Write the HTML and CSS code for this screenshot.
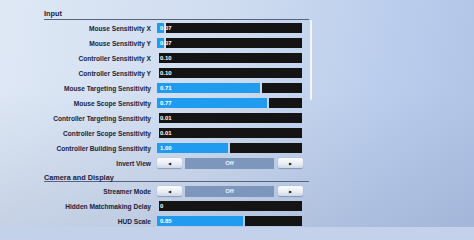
FILE: index.html
```html
<!DOCTYPE html>
<html>
<head>
<meta charset="utf-8">
<link rel="stylesheet" href="styles.css">
</head>
<body>
<div class="screen">
  <div class="panel">
    <div class="section-header first">Input</div>
    <div class="row"><div class="label">Mouse Sensitivity X</div><div class="bar" style="--p:7px">0.07</div></div>
    <div class="row"><div class="label">Mouse Sensitivity Y</div><div class="bar" style="--p:7px">0.07</div></div>
    <div class="row"><div class="label">Controller Sensitivity X</div><div class="bar">0.10</div></div>
    <div class="row"><div class="label">Controller Sensitivity Y</div><div class="bar">0.10</div></div>
    <div class="row"><div class="label">Mouse Targeting Sensitivity</div><div class="bar" style="--p:103px">0.71</div></div>
    <div class="row"><div class="label">Mouse Scope Sensitivity</div><div class="bar" style="--p:110px">0.77</div></div>
    <div class="row"><div class="label">Controller Targeting Sensitivity</div><div class="bar">0.01</div></div>
    <div class="row"><div class="label">Controller Scope Sensitivity</div><div class="bar">0.01</div></div>
    <div class="row"><div class="label">Controller Building Sensitivity</div><div class="bar" style="--p:71px">1.00</div></div>
    <div class="row"><div class="label">Invert View</div>
      <div class="toggle"><span class="btn">&#9664;</span><span class="val">Off</span><span class="btn">&#9654;</span></div>
    </div>
    <div class="section-header second">Camera and Display</div>
    <div class="row"><div class="label">Streamer Mode</div>
      <div class="toggle"><span class="btn">&#9664;</span><span class="val">Off</span><span class="btn">&#9654;</span></div>
    </div>
    <div class="row"><div class="label">Hidden Matchmaking Delay</div><div class="bar">0</div></div>
    <div class="row"><div class="label">HUD Scale</div><div class="bar" style="--p:86px">0.85</div></div>
  </div>
  <div class="scrollbar"></div>
</div>
</body>
</html>
```

FILE: styles.css
```css
html, body {
  margin: 0;
  padding: 0;
}
html {
  background: #c3d1ea;
}
body {
  width: 474px;
  height: 227px;
  overflow: hidden;
  font-family: "Liberation Sans", Arial, sans-serif;
  background:
    linear-gradient(180deg, rgba(255,255,255,0) 40%, rgba(120,135,170,0.22) 100%),
    linear-gradient(100deg, #dee8f5 0%, #cfdcf0 45%, #b9ccec 80%, #b0c3e6 100%);
}
.screen {
  position: relative;
  width: 474px;
  height: 227px;
}
.panel {
  width: 265px;
  margin-left: 44px;
  padding-top: 8px;
  display: flex;
  flex-direction: column;
}
.section-header {
  font-size: 7.3px;
  font-weight: bold;
  color: #18223b;
  border-bottom: 1px solid #56657e;
  display: flex;
  align-items: center;
}
.section-header.first {
  height: 11px;
  margin-bottom: 3px;
}
.section-header.second {
  height: 8px;
  margin-bottom: 4px;
}
.row {
  display: flex;
  align-items: center;
  height: 10px;
  margin-bottom: 5px;
}
.label {
  width: 107px;
  text-align: right;
  font-size: 6.6px;
  font-weight: bold;
  color: #18223c;
  white-space: nowrap;
  margin-right: 6px;
}
.bar {
  --p: 0px;
  width: 145px;
  height: 10px;
  box-sizing: border-box;
  padding-left: 3px;
  font-size: 6px;
  font-weight: bold;
  line-height: 10px;
  color: #ffffff;
  background: linear-gradient(90deg,
    #1f9cf0 0, #1f9cf0 var(--p),
    transparent var(--p), transparent calc(var(--p) + 1.5px),
    #141414 calc(var(--p) + 1.5px), #141414 100%);
}
.toggle {
  width: 146px;
  height: 11px;
  display: flex;
  align-items: center;
  gap: 3px;
}
.btn {
  width: 25px;
  height: 10px;
  border-radius: 2px;
  background: linear-gradient(180deg, #fbfcfe 0%, #e7ecf4 60%, #cfd7e4 100%);
  box-shadow: 0 0.5px 1px rgba(40,55,90,0.35);
  color: #111;
  font-size: 4px;
  display: flex;
  align-items: center;
  justify-content: center;
}
.val {
  flex: 1;
  height: 11px;
  margin-right: 1px;
  background: #7c96bc;
  color: #eef2f8;
  font-size: 6px;
  font-weight: bold;
  display: flex;
  align-items: center;
  justify-content: center;
}
.scrollbar {
  position: absolute;
  left: 310px;
  top: 20px;
  width: 1.5px;
  height: 80px;
  background: #f2f6fc;
  border-radius: 1px;
}
```
